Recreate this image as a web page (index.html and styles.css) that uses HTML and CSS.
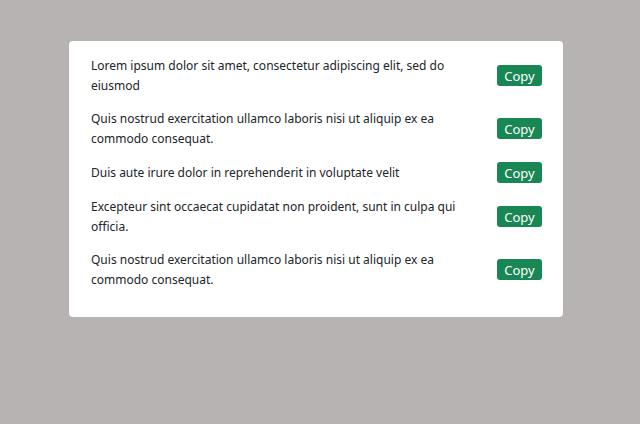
FILE: index.html
```html
<!DOCTYPE html>
<html>
<head>
<meta charset="utf-8">
<link rel="stylesheet" href="styles.css">
</head>
<body>
<div class="page">
  <div class="card">
    <div class="row">
      <p class="text">Lorem ipsum dolor sit amet, consectetur adipiscing elit, sed do eiusmod</p>
      <button class="btn">Copy</button>
    </div>
    <div class="row">
      <p class="text">Quis nostrud exercitation ullamco laboris nisi ut aliquip ex ea commodo consequat.</p>
      <button class="btn">Copy</button>
    </div>
    <div class="row">
      <p class="text">Duis aute irure dolor in reprehenderit in voluptate velit</p>
      <button class="btn">Copy</button>
    </div>
    <div class="row">
      <p class="text">Excepteur sint occaecat cupidatat non proident, sunt in culpa qui officia.</p>
      <button class="btn">Copy</button>
    </div>
    <div class="row">
      <p class="text">Quis nostrud exercitation ullamco laboris nisi ut aliquip ex ea commodo consequat.</p>
      <button class="btn">Copy</button>
    </div>
  </div>
</div>
</body>
</html>
```
FILE: styles.css
```css
html, body {
  margin: 0;
  padding: 0;
  background: #b7b3b2;
  font-family: "Noto Sans", sans-serif;
  color: #212529;
}
.page {
  width: 640px;
  height: 424px;
  padding-top: 41px;
  box-sizing: border-box;
}
.card {
  margin-left: 69px;
  width: 494px;
  height: 276px;
  box-sizing: border-box;
  background: #fff;
  border-radius: 4px;
  padding: 15px 21px 0 22px;
  display: flex;
  flex-direction: column;
  gap: 14px;
}
.row {
  display: flex;
  align-items: center;
  justify-content: space-between;
}
.text {
  margin: 0;
  width: 380px;
  font-size: 12px;
  line-height: 19.5px;
}
.btn {
  font-family: "Noto Sans", sans-serif;
  font-size: 13px;
  background: #198754;
  color: #fff;
  border: none;
  border-radius: 3px;
  width: 45px;
  height: 21px;
  padding: 0;
}
```
